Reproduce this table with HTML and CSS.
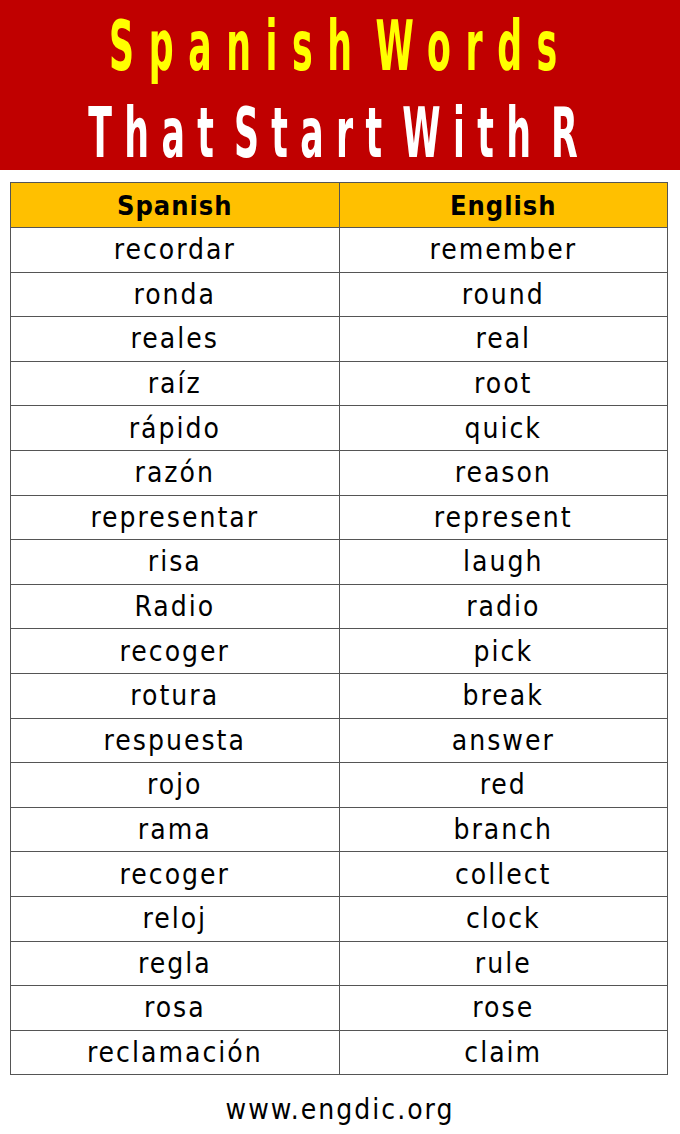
FILE: index.html
```html
<!DOCTYPE html>
<html>
<head>
<meta charset="utf-8">
<link rel="stylesheet" href="styles.css">
</head>
<body>
<header class="banner">
  <div class="title t1"><span>Spanish</span><span>Words</span></div>
  <div class="title t2"><span>That</span><span>Start</span><span>With</span><span>R</span></div>
</header>
<main class="wrap">
<table class="words">
  <thead><tr><th>Spanish</th><th>English</th></tr></thead>
  <tbody>
    <tr><td>recordar</td><td>remember</td></tr>
    <tr><td>ronda</td><td>round</td></tr>
    <tr><td>reales</td><td>real</td></tr>
    <tr><td>raíz</td><td>root</td></tr>
    <tr><td>rápido</td><td>quick</td></tr>
    <tr><td>razón</td><td>reason</td></tr>
    <tr><td>representar</td><td>represent</td></tr>
    <tr><td>risa</td><td>laugh</td></tr>
    <tr><td>Radio</td><td>radio</td></tr>
    <tr><td>recoger</td><td>pick</td></tr>
    <tr><td>rotura</td><td>break</td></tr>
    <tr><td>respuesta</td><td>answer</td></tr>
    <tr><td>rojo</td><td>red</td></tr>
    <tr><td>rama</td><td>branch</td></tr>
    <tr><td>recoger</td><td>collect</td></tr>
    <tr><td>reloj</td><td>clock</td></tr>
    <tr><td>regla</td><td>rule</td></tr>
    <tr><td>rosa</td><td>rose</td></tr>
    <tr><td>reclamación</td><td>claim</td></tr>
  </tbody>
</table>
</main>
<footer class="site">www.engdic.org</footer>
</body>
</html>
```
FILE: styles.css
```css
html, body { margin: 0; padding: 0; background: #fff; }
body { width: 680px; font-family: "DejaVu Sans Condensed", "DejaVu Sans", sans-serif; }
.banner {
  background: #c00000;
  height: 170px;
  display: flex;
  flex-direction: column;
  align-items: center;
  padding: 4px 13px 0 0;
  box-sizing: border-box;
}
.title {
  display: flex;
  gap: 16px;
  font-family: "DejaVu Sans Condensed", sans-serif;
  font-weight: bold;
  font-size: 69px;
  line-height: 85px;
  height: 85px;
  letter-spacing: 26px;
  transform: scaleX(0.56);
  transform-origin: center;
  white-space: nowrap;
  flex-shrink: 0;
}
.title span:last-child { margin-right: -26px; }
.t1 { color: #ffff00; }
.t2 { color: #ffffff; letter-spacing: 22px; gap: 14px; margin-top: 2px; }
.t2 span:last-child { margin-right: -22px; }
.wrap { padding: 12px 12px 0 10px; }
.words {
  width: 658px;
  border-collapse: collapse;
  table-layout: fixed;
}
.words th, .words td {
  border: 1px solid #555;
  text-align: center;
  color: #000;
  font-size: 28px;
  letter-spacing: 2px;
  padding: 0;
  height: 43.6px;
}
.words th {
  background: #ffc000;
  font-weight: bold;
  letter-spacing: 1px;
  font-size: 27px;
  height: 44px;
}
.words td { font-weight: normal; }
.site {
  text-align: center;
  font-size: 28px;
  letter-spacing: 2px;
  color: #000;
  margin-top: 18px;
}
```
